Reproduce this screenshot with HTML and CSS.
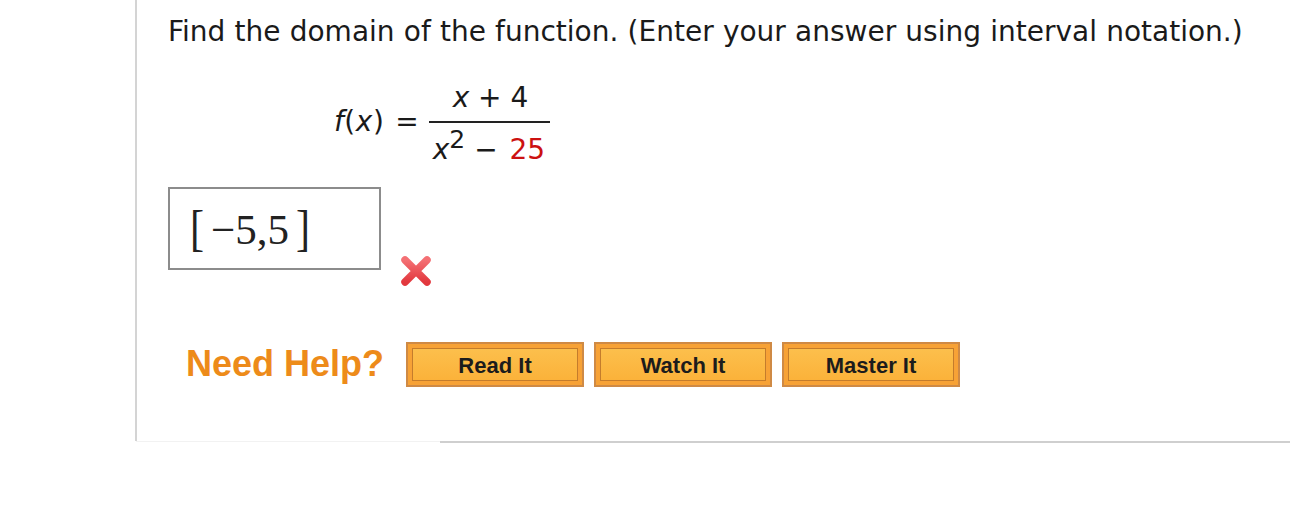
FILE: index.html
```html
<!DOCTYPE html>
<html>
<head>
<meta charset="utf-8">
<link rel="stylesheet" href="styles.css">
</head>
<body>
<div class="page">
  <div class="panel">
    <p class="question">Find the domain of the function. (Enter your answer using interval notation.)</p>
    <div class="formula">
      <span class="lhs"><i>f</i>(<i>x</i>)</span>
      <span class="eq">=</span>
      <span class="frac">
        <span class="num"><i>x</i> + 4</span>
        <span class="den"><i>x</i><sup>2</sup> − <span class="red">25</span></span>
      </span>
    </div>
    <div class="answer-row">
      <div class="answer-box"><span class="answer"><span class="br br-l">[</span>−5,5<span class="br br-r">]</span></span></div>
      <svg class="wrong" width="34" height="32" viewBox="0 0 34 32">
        <defs>
          <linearGradient id="xg" x1="0" y1="0" x2="0" y2="1">
            <stop offset="0" stop-color="#f47074"/>
            <stop offset="1" stop-color="#e2383e"/>
          </linearGradient>
        </defs>
        <path d="M6 5 L28 27 M28 5 L6 27" stroke="url(#xg)" stroke-width="7.5" stroke-linecap="round"/>
      </svg>
    </div>
    <div class="help">
      <span class="need">Need Help?</span>
      <button class="btn"><span>Read It</span></button>
      <button class="btn"><span>Watch It</span></button>
      <button class="btn"><span>Master It</span></button>
    </div>
  </div>
  <div class="footer">
    <div class="foot-left"></div>
    <div class="foot-right"></div>
  </div>
</div>
</body>
</html>
```
FILE: styles.css
```css
html, body {
  margin: 0;
  padding: 0;
  background: #fff;
}
.page {
  width: 1290px;
}
.panel {
  margin-left: 135px;
  border-left: 2px solid #d4d4d4;
  height: 441px;
  padding-left: 31px;
  box-sizing: border-box;
  padding-top: 14px;
  font-family: "DejaVu Sans", Verdana, sans-serif;
  color: #1a1a1a;
}
.question {
  margin: 0;
  font-size: 28px;
  line-height: 36px;
  white-space: nowrap;
  word-spacing: 0.3px;
}
.formula {
  display: flex;
  align-items: flex-start;
  margin-left: 166px;
  margin-top: 32px;
  font-size: 28px;
}
.lhs {
  margin-top: 24px;
  line-height: 32px;
  letter-spacing: 0.5px;
}
.eq {
  margin: 24px 10px 0 11px;
  line-height: 32px;
}
.frac {
  display: flex;
  flex-direction: column;
  align-items: center;
}
.num {
  line-height: 32px;
  border-bottom: 2px solid #222;
  padding: 0 20px 7px 22px;
  width: 100%;
  text-align: center;
  box-sizing: border-box;
  word-spacing: 0;
}
.den {
  line-height: 34px;
  padding: 10px 5px 0 4px;
  white-space: nowrap;
}
.den sup {
  font-size: 25px;
  vertical-align: 11px;
  line-height: 0;
  margin-right: 0;
}
.den .red {
  margin-left: 3px;
}
.red {
  color: #cc1111;
}
.answer-row {
  display: flex;
  align-items: flex-end;
  margin-top: 20px;
}
.answer-box {
  width: 213px;
  height: 83px;
  box-sizing: border-box;
  border: 2px solid #8c8c8c;
  padding-left: 20px;
  display: flex;
  align-items: center;
}
.answer {
  font-family: "Liberation Serif", "Times New Roman", serif;
  font-size: 43px;
  color: #222;
  margin-top: 2px;
  white-space: nowrap;
  display: flex;
  align-items: center;
}
.br {
  display: inline-block;
  font-size: 42px;
  line-height: 1;
  transform: scaleY(1.2);
  margin-top: -3px;
}
.br-l {
  margin-right: 7px;
}
.br-r {
  margin-left: 7px;
}
.wrong {
  margin-left: 18px;
  margin-bottom: -17px;
}
.help {
  display: flex;
  align-items: center;
  margin-top: 72px;
  margin-left: 18px;
}
.need {
  font-family: "Liberation Sans", Arial, sans-serif;
  font-weight: bold;
  font-size: 36px;
  color: #ed8b1a;
  margin-right: 22px;
  margin-top: -2px;
}
.btn {
  width: 178px;
  height: 45px;
  margin-right: 10px;
  padding: 4px;
  border: 2px solid #cf8a45;
  background: #f7a236;
  box-sizing: border-box;
  font-family: "Liberation Sans", Arial, sans-serif;
  font-weight: bold;
  font-size: 22px;
  color: #1c1c1c;
  cursor: pointer;
}
.btn span {
  display: flex;
  align-items: center;
  justify-content: center;
  height: 100%;
  padding-top: 3px;
  border: 1px solid #c47c2c;
  background: linear-gradient(#fcbf4c, #fbb23a);
  box-sizing: border-box;
}
.footer {
  display: flex;
  height: 2px;
}
.foot-left {
  margin-left: 136px;
  width: 304px;
  border-top: 1px solid #f2f2f2;
}
.foot-right {
  flex: 1;
  background: #cfcfcf;
}
```
